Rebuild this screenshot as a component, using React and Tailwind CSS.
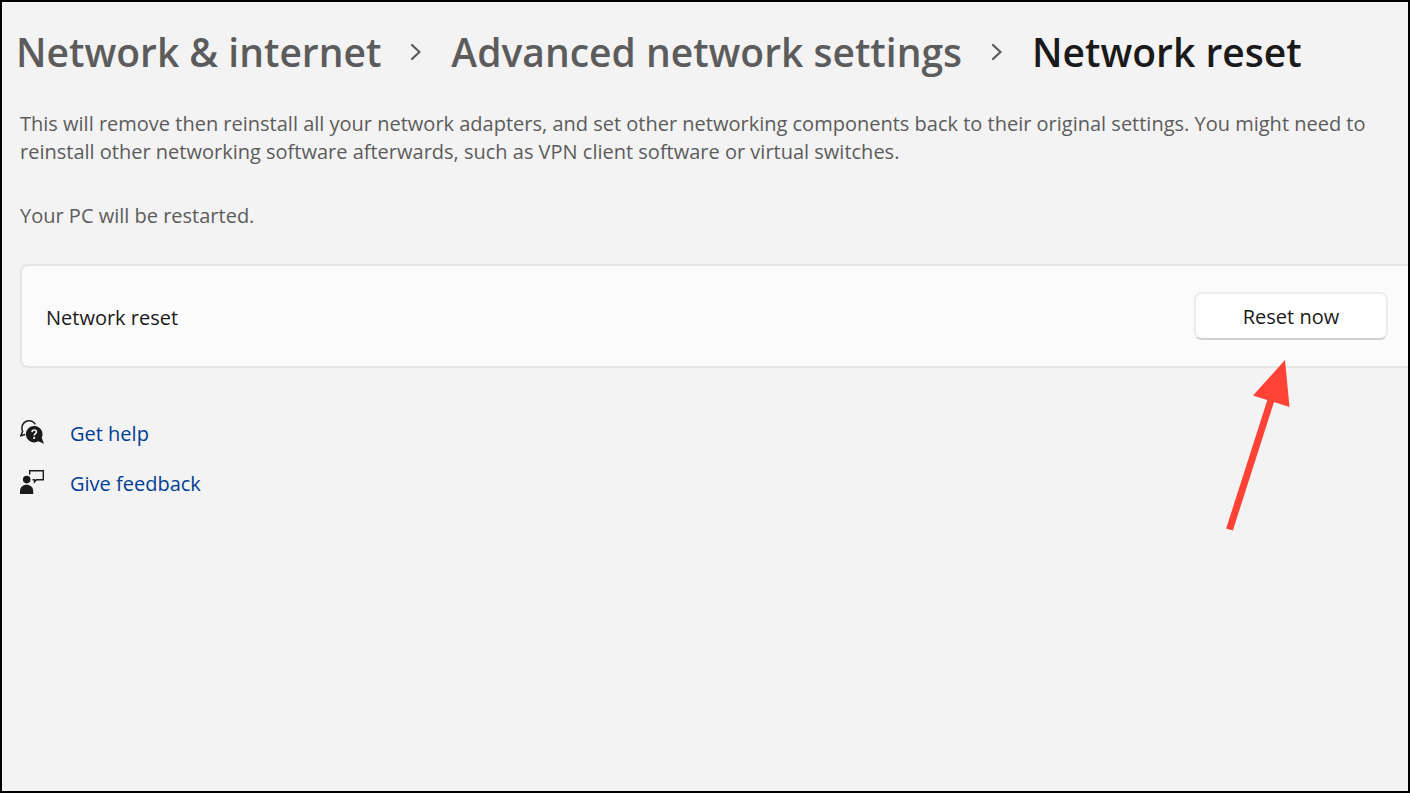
import React from "react";

function Chevron() {
  return (
    <svg className="h-5 w-3 shrink-0" viewBox="0 0 12 20" fill="none" stroke="#5c5c5c" strokeWidth="2.300" strokeLinecap="round" strokeLinejoin="round" aria-hidden="true">
      <path d="M2 3 L9.500 10 L2 17" />
    </svg>
  );
}

function HelpIcon() {
  return (
    <svg className="size-6 shrink-0" viewBox="0 0 24 24" aria-hidden="true">
      <path d="M15.300 4.300 C13.700 1.800 11.300 0.800 9 0.800 C5 0.800 1.900 3.900 1.900 7.900 C1.900 9.300 2.100 10.400 2.600 11.500 L0.800 15.700 L5.200 14.600" fill="none" stroke="#1a1a1a" strokeWidth="1.500" />
      <path d="M14.200 6 A8.200 8.200 0 1 0 18.200 21.300 L24 23.800 L21.700 17.800 A8.200 8.200 0 0 0 14.200 6 Z" fill="#1a1a1a" />
      <path d="M12 12.100 C12.100 10.700 13 10 14.200 10 C15.500 10 16.400 10.800 16.400 11.900 C16.400 13.600 14.200 13.600 14.200 15.600" fill="none" stroke="#f3f3f3" strokeWidth="1.600" />
      <circle cx="14.200" cy="17.900" r="1.100" fill="#f3f3f3" />
    </svg>
  );
}

function FeedbackIcon() {
  return (
    <svg className="size-6 shrink-0" viewBox="0 0 24 24" aria-hidden="true">
      <circle cx="6.700" cy="9.600" r="3.800" fill="#1a1a1a" />
      <path d="M0 24 V21 C0 17 3 14.700 6.500 14.700 C10.200 14.700 13.200 17 13.200 21 V24 Z" fill="#1a1a1a" />
      <path d="M9.700 4.500 V0.700 H23.300 V9.800 H16.500 L14.500 12 V9.800 H12.500" fill="none" stroke="#1a1a1a" strokeWidth="1.400" />
    </svg>
  );
}

function Arrow() {
  return (
    <svg className="pointer-events-none absolute top-full right-24 mt-[19px] h-[172px] w-[66px]" viewBox="0 0 66 172" aria-hidden="true">
      <path d="M3.500 170.500 L45 41" stroke="#ff4236" strokeWidth="7" />
      <path d="M59 1 L27 36.500 L63.500 48 Z" fill="#ff4236" />
    </svg>
  );
}

export default function App() {
  return (
    <div className="min-h-screen border-2 border-black bg-[#f3f3f3] pt-6 pl-[18px] font-['Open_Sans','Noto_Sans',sans-serif] text-xl text-[#1a1a1a]">
      <nav aria-label="Breadcrumb" className="-ml-1">
        <ol className="flex items-center gap-[29px] text-[39px] leading-[52px] font-semibold whitespace-nowrap">
          <li><a href="#network" className="text-[#5c5c5c]">Network &amp; internet</a></li>
          <li aria-hidden="true"><Chevron /></li>
          <li><a href="#advanced" className="text-[#5c5c5c]">Advanced network settings</a></li>
          <li aria-hidden="true"><Chevron /></li>
          <li><h1>Network reset</h1></li>
        </ol>
      </nav>

      <main>
        <div className="mt-8 flex flex-col gap-9 pr-8 leading-7 text-[#5c5c5c]">
          <p>
            This will remove then reinstall all your network adapters, and set other networking components back to their original settings. You might need to reinstall other networking software afterwards, such as VPN client software or virtual switches.
          </p>
          <p>Your PC will be restarted.</p>
        </div>

        <section className="mt-[34px] flex items-center justify-between rounded-l-lg border-2 border-r-0 border-[#e5e5e5] bg-[#fbfbfb] py-[26px] pr-5 pl-6">
          <h2 className="pt-1">Network reset</h2>
          <div className="relative">
            <button type="button" className="h-12 w-[194px] rounded-lg border-2 border-[#ececec] border-b-[#d0d0d0] bg-[#fefefe] pt-0.5">
              Reset now
            </button>
            <Arrow />
          </div>
        </section>

        <ul className="mt-[52px] flex flex-col gap-[22px] leading-7 text-[#003e92]">
          <li>
            <a href="#help" className="flex w-fit items-start gap-[26px]"><HelpIcon />Get help</a>
          </li>
          <li>
            <a href="#feedback" className="flex w-fit items-start gap-[26px]"><FeedbackIcon />Give feedback</a>
          </li>
        </ul>
      </main>
    </div>
  );
}
